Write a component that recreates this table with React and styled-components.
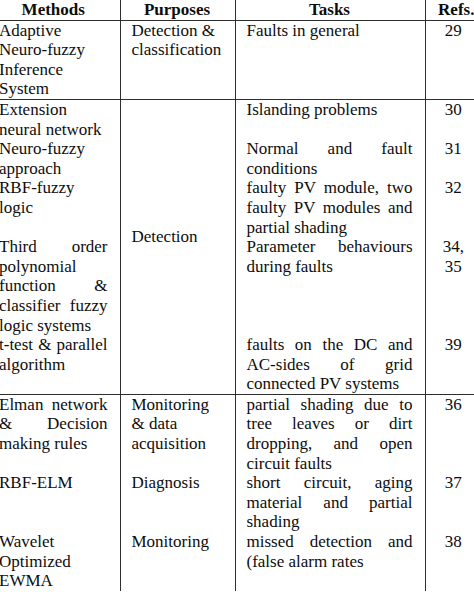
import React from "react";
import styled, { createGlobalStyle } from "styled-components";

const GlobalStyle = createGlobalStyle`
  html, body {
    margin: 0;
    padding: 0;
    background: #ffffff;
    overflow: hidden;
    font-family: "Liberation Serif", "Times New Roman", serif;
  }
`;

const Page = styled.div`
  width: 474px;
  height: 592px;
  overflow: hidden;
  background: #ffffff;
`;

const Table = styled.table`
  margin-left: -12px;
  width: 500px;
  table-layout: fixed;
  border-collapse: collapse;
  font-family: "Liberation Serif", "Times New Roman", serif;
  font-size: 17px;
  line-height: 19.6px;
  color: #0d0d0d;
`;

const Col = styled.col`
  width: ${(p) => p.$w}px;
`;

const HeadCell = styled.th`
  padding: 0 12px 0 11px;
  font-weight: bold;
  text-align: center;
  border-left: 1px solid #2e2e2e;
  border-bottom: 1px solid #2e2e2e;
  white-space: nowrap;

  &:first-child {
    border-left: none;
  }
`;

const Group = styled.tbody`
  border-top: 1px solid #2e2e2e;
`;

const Cell = styled.td`
  padding: ${(p) => (p.$ref ? "0 15px 0 8px" : "0 12px 0 11px")};
  vertical-align: top;
  text-align: ${(p) => p.$align || "left"};
  border-left: 1px solid #2e2e2e;

  &:first-child {
    border-left: none;
  }
`;

// "Detection" sits a line above the middle of its group, as in the source
const SpanCell = styled.td`
  padding: 0 12px 19.6px 11px;
  vertical-align: middle;
  text-align: left;
  border-left: 1px solid #2e2e2e;
`;

const groups = [
  {
    rows: [
      {
        method: "Adaptive Neuro-fuzzy Inference System",
        purpose: "Detection & classification",
        task: "Faults in general",
        ref: "29",
      },
    ],
  },
  {
    purpose: "Detection",
    rows: [
      { method: "Extension neural network", task: "Islanding problems", ref: "30" },
      { method: "Neuro-fuzzy approach", task: "Normal and fault conditions", ref: "31" },
      {
        method: "RBF-fuzzy logic",
        task: "faulty PV module, two faulty PV modules and partial shading",
        ref: "32",
      },
      {
        method: "Third order polynomial function & classifier fuzzy logic systems",
        task: "Parameter behaviours during faults",
        ref: "34, 35",
      },
      {
        method: "t-test & parallel algorithm",
        task: "faults on the DC and AC-sides of grid connected PV systems",
        ref: "39",
      },
    ],
  },
  {
    rows: [
      {
        method: "Elman network & Decision making rules",
        purpose: "Monitoring & data acquisition",
        task: "partial shading due to tree leaves or dirt dropping, and open circuit faults",
        ref: "36",
      },
      {
        method: "RBF-ELM",
        purpose: "Diagnosis",
        task: "short circuit, aging material and partial shading",
        ref: "37",
      },
      {
        method: "Wavelet Optimized EWMA",
        purpose: "Monitoring",
        task: "missed detection and (false alarm rates",
        ref: "38",
      },
    ],
  },
];

export default function App() {
  return (
    <Page>
      <GlobalStyle />
      <Table>
        <colgroup>
          <Col $w={132} />
          <Col $w={115} />
          <Col $w={190} />
          <Col $w={63} />
        </colgroup>
        <thead>
          <tr>
            <HeadCell>Methods</HeadCell>
            <HeadCell>Purposes</HeadCell>
            <HeadCell>Tasks</HeadCell>
            <HeadCell>Refs.</HeadCell>
          </tr>
        </thead>
        {groups.map((g, gi) => (
          <Group key={gi}>
            {g.rows.map((r, ri) => (
              <tr key={ri}>
                <Cell $align="justify">{r.method}</Cell>
                {g.purpose ? (
                  ri === 0 && <SpanCell rowSpan={g.rows.length}>{g.purpose}</SpanCell>
                ) : (
                  <Cell>{r.purpose}</Cell>
                )}
                <Cell $align="justify">{r.task}</Cell>
                <Cell $align="center" $ref>
                  {r.ref}
                </Cell>
              </tr>
            ))}
          </Group>
        ))}
      </Table>
    </Page>
  );
}
